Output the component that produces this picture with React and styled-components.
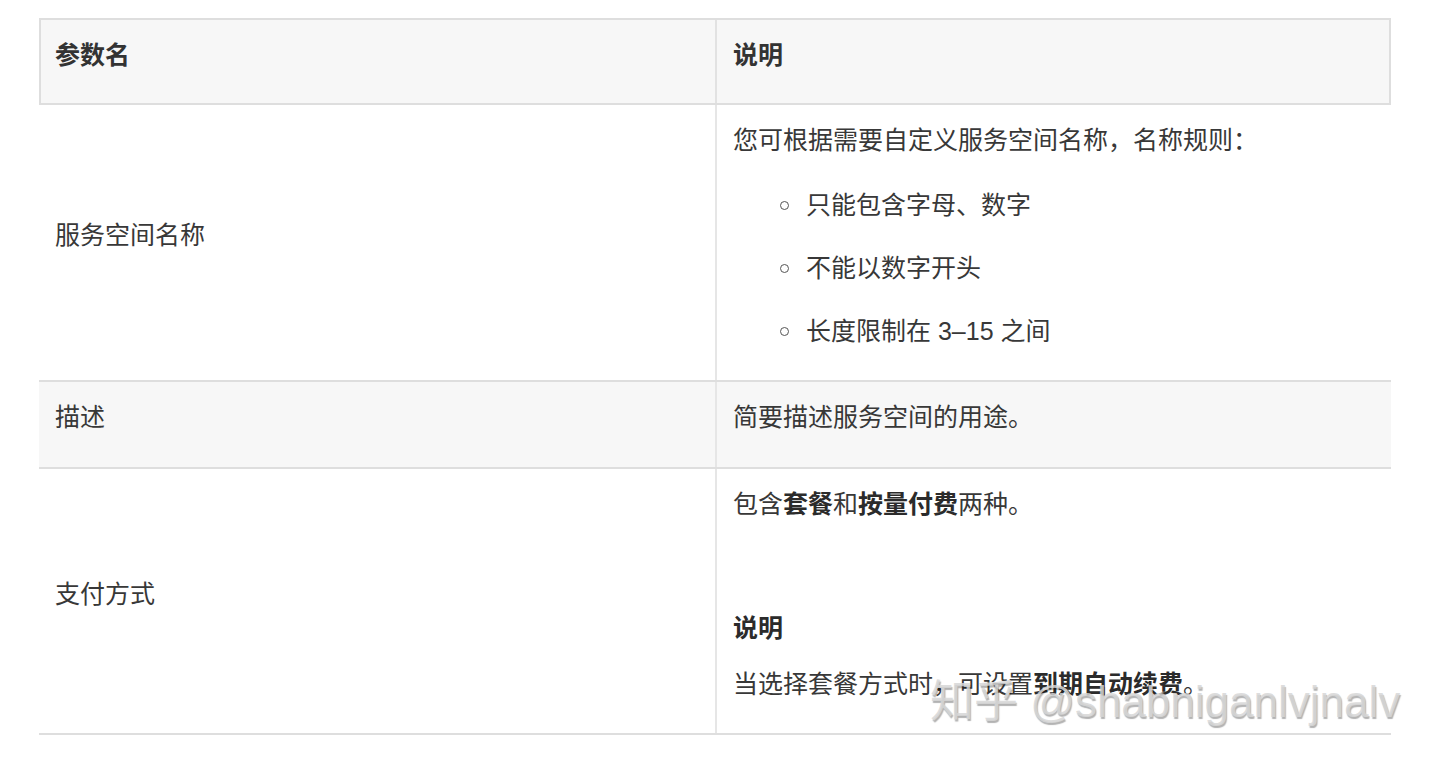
import styled, { createGlobalStyle } from "styled-components";

const GlobalStyle = createGlobalStyle`
  html, body {
    margin: 0;
    padding: 0;
    background: #fff;
  }
  body {
    font-family: "Liberation Sans", "Noto Sans CJK SC", sans-serif;
    color: #383838;
  }
`;

const rules = ["只能包含字母、数字", "不能以数字开头", "长度限制在 3–15 之间"];

const App = () => {
  return (
    <Page>
      <GlobalStyle />
      <Table>
        <HeadRow>
          <HeadCell>参数名</HeadCell>
          <HeadCell divider>说明</HeadCell>
        </HeadRow>
        <Row>
          <NameCell>服务空间名称</NameCell>
          <DescCell>
            <Para>您可根据需要自定义服务空间名称，名称规则：</Para>
            <List>
              {rules.map((r) => (
                <Item key={r}>{r}</Item>
              ))}
            </List>
          </DescCell>
        </Row>
        <Row striped>
          <NameCell>描述</NameCell>
          <DescCell>
            <Para>简要描述服务空间的用途。</Para>
          </DescCell>
        </Row>
        <Row>
          <NameCell>支付方式</NameCell>
          <DescCell>
            <Para>
              包含<b>套餐</b>和<b>按量付费</b>两种。
            </Para>
            <Note>
              <NoteTitle>说明</NoteTitle>
              <Para>
                当选择套餐方式时，可设置<b>到期自动续费</b>。
              </Para>
            </Note>
          </DescCell>
        </Row>
        <Watermark>知乎 @shabniganlvjnalv</Watermark>
      </Table>
    </Page>
  );
};

const Page = styled.div`
  padding: 18px 49px 0 39px;
`;

const Table = styled.div`
  position: relative;
  width: 1352px;
  font-size: 25px;
  line-height: 42px;

  b {
    font-weight: 700;
    color: #2b2b2b;
  }
`;

const HeadRow = styled.div`
  display: grid;
  grid-template-columns: 674px 1fr;
  background: #f7f7f7;
  border: 2px solid #dedede;
`;

const HeadCell = styled.div`
  padding: 14px 14px 27px;
  font-weight: 700;
  color: #333;
  border-left: ${(p) => (p.divider ? "2px solid #e2e2e2" : "none")};
  padding-left: ${(p) => (p.divider ? "16px" : "14px")};
`;

const Row = styled.div`
  display: grid;
  grid-template-columns: 676px 1fr;
  background: ${(p) => (p.striped ? "#f7f7f7" : "#fff")};
  border-bottom: 2px solid #dedede;
`;

const NameCell = styled.div`
  display: flex;
  align-items: center;
  padding: 14px 16px 29px;
`;

const DescCell = styled.div`
  padding: 14px 16px 28px;
  border-left: 2px solid #e6e6e6;
`;

const Para = styled.p`
  margin: 0;
`;

const List = styled.ul`
  list-style: none;
  margin: 23px 0 0;
  padding: 0;
`;

const Item = styled.li`
  display: flex;
  align-items: center;
  margin-top: 21px;

  &:first-child {
    margin-top: 0;
  }

  &::before {
    content: "";
    width: 7px;
    height: 7px;
    border: 1.5px solid #555;
    border-radius: 50%;
    margin: 0 17px 0 47px;
    flex: none;
  }
`;

const Note = styled.div`
  margin-top: 82px;
`;

const NoteTitle = styled.div`
  font-weight: 700;
  color: #2b2b2b;
  margin-bottom: 14px;
`;

const Watermark = styled.div`
  position: absolute;
  left: 891px;
  top: 654px;
  font-family: "Liberation Sans", "Noto Sans CJK SC", sans-serif;
  font-size: 44px;
  line-height: 60px;
  color: rgba(215, 215, 215, 0.85);
  text-shadow: 1px 2px 1px rgba(0, 0, 0, 0.3);
  white-space: nowrap;
  pointer-events: none;
`;

export default App;
